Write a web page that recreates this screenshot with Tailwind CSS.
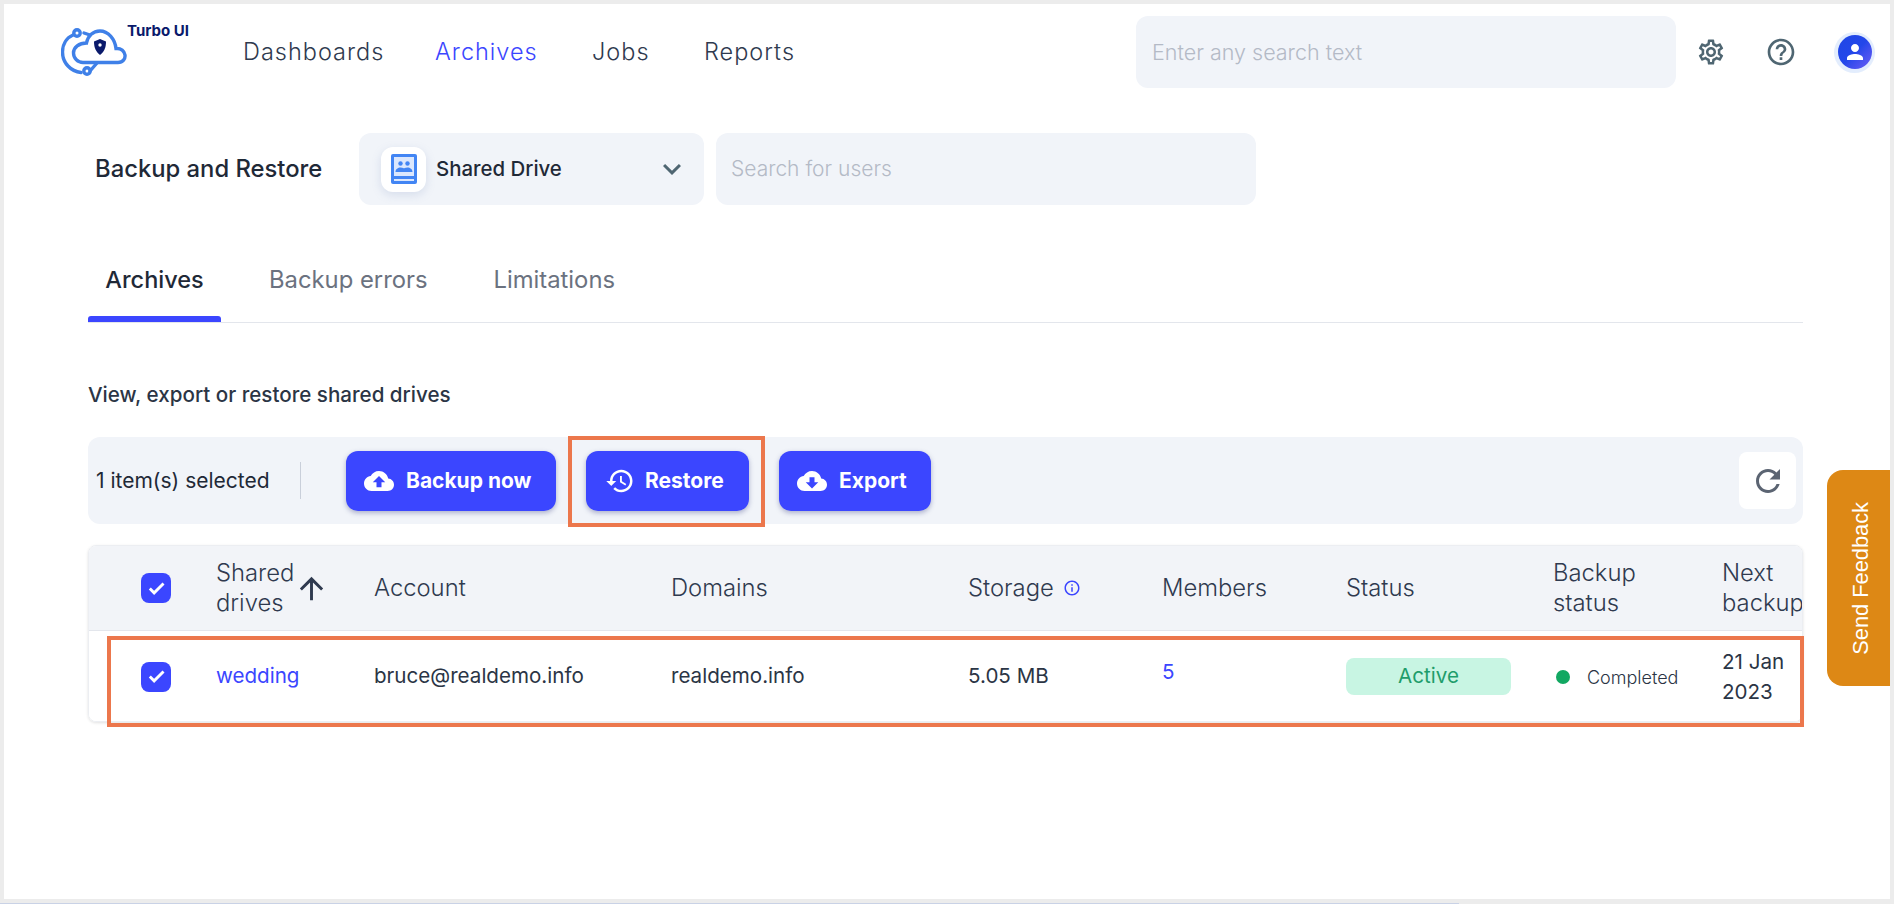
<!DOCTYPE html>
<html lang="en">
<head>
  <meta charset="UTF-8">
  <title>Turbo UI - Archives</title>
  <script src="https://cdn.jsdelivr.net/npm/@tailwindcss/browser@4"></script>
</head>
<body class="bg-[#ececec] font-['Inter',sans-serif] overflow-hidden">
  <div class="relative h-[904px] pt-1 px-1 pb-[5px]">
    <div class="h-[895px] bg-white">

      <!-- top bar -->
      <header class="flex items-center h-[96px] pl-[57px] pr-[15px]">
        <div class="flex items-start w-[182px] h-[47px] mb-[2px]">
          <svg width="66" height="48" viewBox="61 26 66 48" fill="none" stroke="#3f80e8" stroke-width="3.400" stroke-linecap="round" class="shrink-0">
            <circle cx="77" cy="31" r="3.200"/>
            <circle cx="87" cy="69" r="3.200"/>
            <path d="M73 33C66 36 62.500 43 62.500 50C62.500 61 71 69.500 81 70.500"/>
            <path d="M90 69L97 61"/>
            <path d="M84 31L90 33"/>
            <path d="M83 60.500H118C123 60.500 125.500 56.500 125 53C124.500 49 121 46 116 46.500C115 37 108 29 100 29C93 29 88 34 86.500 41C79 41 73.500 45.500 73.500 51C73.500 56.500 78 60.500 83 60.500Z"/>
            <path d="M100 37L106 39.500C106 46 104 50 100 53C96 50 94 46 94 39.500Z" fill="#0a1a6b" stroke="none"/>
            <circle cx="100" cy="43" r="1.700" fill="#fff" stroke="none"/>
          </svg>
          <span class="-mt-[6px] text-[15px] leading-[18px] font-bold text-[#0a1a6b]">Turbo UI</span>
        </div>
        <nav class="grid grid-cols-[192px_157px_112px_auto] items-center text-[23.500px] font-light tracking-[1px] text-[#2f3a4f]">
          <a class="block">Dashboards</a>
          <a class="block text-[#3b46ff]">Archives</a>
          <a class="block">Jobs</a>
          <a class="block">Reports</a>
        </nav>
        <div class="ml-auto flex items-center">
          <div class="flex items-center w-[540px] h-[72px] px-4 rounded-xl bg-[#f1f4f9] text-[21.500px] font-light text-[#b4bac6]">Enter any search text</div>
          <svg width="30" height="30" viewBox="0 0 24 24" fill="#4f6672" class="ml-5"><path d="M19.430 12.980c.04-.32.07-.64.07-.98 0-.34-.03-.66-.07-.98l2.110-1.650c.19-.15.24-.42.12-.64l-2-3.460c-.09-.16-.26-.25-.44-.25-.06 0-.12.01-.17.03l-2.490 1c-.52-.4-1.080-.73-1.690-.98l-.38-2.650C14.460 2.180 14.250 2 14 2h-4c-.25 0-.46.18-.49.42l-.38 2.650c-.61.25-1.170.59-1.690.98l-2.490-1c-.06-.02-.12-.03-.18-.03-.17 0-.34.09-.43.25l-2 3.460c-.13.22-.07.49.12.64l2.110 1.650c-.04.32-.07.65-.07.98 0 .33.03.66.07.98l-2.110 1.650c-.19.15-.24.42-.12.64l2 3.460c.09.16.26.25.44.25.06 0 .12-.01.17-.03l2.490-1c.52.4 1.080.73 1.690.98l.38 2.650c.03.24.24.42.49.42h4c.25 0 .46-.18.49-.42l.38-2.650c.61-.25 1.170-.59 1.690-.98l2.490 1c.06.02.12.03.18.03.17 0 .34-.09.43-.25l2-3.460c.12-.22.07-.49-.12-.64l-2.110-1.650zm-1.980-1.710c.04.31.05.52.05.73 0 .21-.02.43-.05.73l-.14 1.130.89.7 1.080.84-.7 1.210-1.270-.51-1.040-.42-.9.68c-.43.32-.84.56-1.250.73l-1.060.43-.16 1.130-.2 1.350h-1.400l-.19-1.350-.16-1.130-1.060-.43c-.43-.18-.83-.41-1.230-.71l-.91-.7-1.060.43-1.270.51-.7-1.210 1.080-.84.89-.7-.14-1.130c-.03-.31-.05-.54-.05-.74s.02-.43.05-.73l.14-1.130-.89-.7-1.080-.84.7-1.210 1.270.51 1.040.42.9-.68c.43-.32.84-.56 1.250-.73l1.060-.43.16-1.130.2-1.350h1.390l.19 1.350.16 1.130 1.060.43c.43.18.83.41 1.230.71l.91.7 1.060-.43 1.270-.51.7 1.210-1.070.85-.89.7.14 1.130zM12 8c-2.210 0-4 1.790-4 4s1.790 4 4 4 4-1.790 4-4-1.790-4-4-4zm0 6c-1.100 0-2-.9-2-2s.9-2 2-2 2 .9 2 2-.9 2-2 2z"/></svg>
          <svg width="32" height="32" viewBox="0 0 24 24" fill="#4f6672" class="ml-[39px]"><path d="M11 18h2v-2h-2v2zm1-16C6.480 2 2 6.480 2 12s4.480 10 10 10 10-4.480 10-10S17.520 2 12 2zm0 18c-4.410 0-8-3.590-8-8s3.590-8 8-8 8 3.590 8 8-3.590 8-8 8zm0-14c-2.210 0-4 1.790-4 4h2c0-1.100.9-2 2-2s2 .9 2 2c0 2-3 1.750-3 5h2c0-2.250 3-2.500 3-5 0-2.210-1.790-4-4-4z"/></svg>
          <div class="ml-[37px] flex items-center justify-center w-[41px] h-[41px] rounded-full bg-[#e3edfd]">
            <div class="flex items-center justify-center w-[34px] h-[34px] rounded-full bg-linear-to-br from-[#1f46e5] via-[#2347ea] to-[#6a5cf5]">
              <svg width="24" height="24" viewBox="0 0 24 24" fill="#fff"><path d="M12 12c2.210 0 4-1.790 4-4s-1.790-4-4-4-4 1.790-4 4 1.790 4 4 4zm0 2c-2.670 0-8 1.340-8 4v2h16v-2c0-2.660-5.330-4-8-4z"/></svg>
            </div>
          </div>
        </div>
      </header>

      <main class="pl-[84px] pr-[87px]">
        <!-- page heading + selectors -->
        <div class="flex items-center mt-[33px] h-[72px]">
          <h1 class="w-[271px] pl-[7px] text-[23.800px] font-medium text-[#1f2937]">Backup and Restore</h1>
          <div class="flex items-center w-[345px] h-[72px] pl-[22px] pr-[21px] rounded-xl bg-[#f1f4f9]">
            <div class="flex items-center justify-center w-[45px] h-[45px] rounded-xl bg-white shadow-[0_3px_10px_rgba(120,140,190,0.22)]">
              <svg width="26" height="30" viewBox="0 0 26 30">
                <path d="M0 2a2 2 0 0 1 2-2h22a2 2 0 0 1 2 2v26a2 2 0 0 1-2 2H2a2 2 0 0 1-2-2z" fill="#4285f4"/>
                <rect x="3" y="3" width="20" height="19" fill="#dbe7fd"/>
                <rect x="3" y="25" width="20" height="2" fill="#dbe7fd"/>
                <circle cx="9.500" cy="9.500" r="2.200" fill="#4285f4"/>
                <circle cx="16.500" cy="9.500" r="2.200" fill="#4285f4"/>
                <path d="M4.500 18c0-3 2.500-4.500 5-4.500s3.500 1 3.500 1 1-1 3.500-1 5 1.500 5 4.500z" fill="#4285f4"/>
              </svg>
            </div>
            <span class="ml-[10px] text-[20.400px] font-medium text-[#1f2937]">Shared Drive</span>
            <svg width="36" height="36" viewBox="0 0 24 24" fill="#4f6672" class="ml-auto -mr-[7px]"><path d="M16.590 8.590L12 13.170 7.410 8.590 6 10l6 6 6-6z"/></svg>
          </div>
          <div class="flex items-center w-[540px] h-[72px] ml-3 px-[15px] rounded-xl bg-[#f1f4f9] text-[21px] font-light text-[#b4bac6]">Search for users</div>
        </div>

        <!-- tabs -->
        <div class="flex items-end h-[118px] border-b border-[#e3e6ec]">
          <div class="flex flex-col w-[133px] h-[85px]">
            <span class="flex-1 flex items-center justify-center pt-[6px] text-[23.500px] font-medium text-[#1f2937]">Archives</span>
            <span class="h-[6px] rounded-t-[3px] bg-[#3b46ff]"></span>
          </div>
          <div class="flex items-center h-[85px] ml-[48px] text-[23.800px] text-[#6b7280]">Backup errors</div>
          <div class="flex items-center h-[85px] ml-[66px] text-[23.800px] text-[#6b7280]">Limitations</div>
        </div>

        <p class="mt-[59px] text-[20.600px] leading-[26px] font-medium text-[#2b3545]">View, export or restore shared drives</p>

        <!-- action toolbar -->
        <div class="flex items-center h-[87px] mt-[29px] pl-[8px] pr-[7px] rounded-xl bg-[#f1f4f9]">
          <span class="w-[204px] text-[21px] text-[#1f2937]">1 item(s) selected</span>
          <span class="w-px h-[37px] bg-[#c9cfda]"></span>
          <button class="flex items-center h-[60px] ml-[45px] pl-[18px] w-[210px] rounded-xl bg-[#3b46ff] text-[21px] font-bold text-white shadow-[0_2px_5px_rgba(40,50,120,0.35)]">
            <svg width="30" height="30" viewBox="0 0 24 24" fill="#fff"><path d="M19.350 10.040C18.670 6.590 15.640 4 12 4 9.110 4 6.600 5.640 5.350 8.040 2.340 8.360 0 10.910 0 14c0 3.310 2.690 6 6 6h13c2.760 0 5-2.240 5-5 0-2.640-2.050-4.780-4.650-4.960zM14 13v4h-4v-4H7l5-5 5 5h-3z"/></svg>
            <span class="ml-3">Backup now</span>
          </button>
          <button class="flex items-center h-[60px] ml-[30px] pl-[19px] w-[163px] rounded-xl bg-[#3b46ff] text-[21px] font-bold text-white shadow-[0_2px_5px_rgba(40,50,120,0.35)]">
            <svg width="30" height="30" viewBox="0 0 24 24" fill="#fff"><path d="M13 3c-4.970 0-9 4.030-9 9H1l3.890 3.890.07.14L9 12H6c0-3.870 3.130-7 7-7s7 3.130 7 7-3.130 7-7 7c-1.930 0-3.680-.79-4.940-2.060l-1.420 1.420C8.270 19.990 10.510 21 13 21c4.970 0 9-4.030 9-9s-4.030-9-9-9zm-1 5v5l4.280 2.540.72-1.210-3.500-2.080V8H12z"/></svg>
            <span class="ml-[10px]">Restore</span>
          </button>
          <button class="flex items-center h-[60px] ml-[30px] pl-[18px] w-[152px] rounded-xl bg-[#3b46ff] text-[21px] font-bold text-white shadow-[0_2px_5px_rgba(40,50,120,0.35)]">
            <svg width="30" height="30" viewBox="0 0 24 24" fill="#fff"><path d="M19.350 10.040C18.670 6.590 15.640 4 12 4 9.110 4 6.600 5.640 5.350 8.040 2.340 8.360 0 10.910 0 14c0 3.310 2.690 6 6 6h13c2.760 0 5-2.240 5-5 0-2.640-2.050-4.780-4.650-4.960zM17 13l-5 5-5-5h3V9h4v4h3z"/></svg>
            <span class="ml-3">Export</span>
          </button>
          <div class="ml-auto flex items-center justify-center w-[57px] h-[57px] rounded-lg bg-white">
            <svg width="36" height="36" viewBox="0 0 24 24" fill="#5b6472"><path d="M17.650 6.350C16.200 4.900 14.210 4 12 4c-4.420 0-7.990 3.580-7.990 8s3.570 8 7.990 8c3.730 0 6.840-2.550 7.730-6h-2.080c-.82 2.330-3.040 4-5.650 4-3.310 0-6-2.690-6-6s2.690-6 6-6c1.660 0 3.140.69 4.220 1.780L13 11h7V4l-2.350 2.350z"/></svg>
          </div>
        </div>

        <!-- table -->
        <div class="mt-[21px] h-[177px] w-[1715px] overflow-hidden rounded-lg border border-[#eceef2] shadow-[0_1px_3px_rgba(0,0,0,0.12)] text-[20.600px]">
          <div class="grid grid-cols-[127px_158px_297px_297px_194px_184px_207px_169px_200px] items-center h-[85px] border-b border-[#e3e6ec] bg-[#f2f4f8] text-[23.800px] font-light leading-[30px] text-[#2f3a4f]">
            <div class="pl-[52px]">
              <span class="flex items-center justify-center w-[30px] h-[30px] rounded-lg bg-[#3b46ff]"><svg width="19" height="19" viewBox="0 0 24 24" fill="#fff" stroke="#fff" stroke-width="1.600"><path d="M9 16.170L4.830 12l-1.420 1.410L9 19 21 7l-1.410-1.410z"/></svg></span>
            </div>
            <div class="flex items-center">
              <span>Shared<br>drives</span>
              <svg width="35" height="35" viewBox="0 0 24 24" fill="#2f3a4f"><path d="M4 12l1.410 1.410L11 7.830V20h2V7.830l5.580 5.590L20 12l-8-8-8 8z"/></svg>
            </div>
            <div>Account</div>
            <div>Domains</div>
            <div class="flex items-center gap-[9px]">Storage
              <svg width="18" height="18" viewBox="0 0 24 24" fill="#3b46ff"><path d="M11 7h2v2h-2zm0 4h2v6h-2zm1-9C6.480 2 2 6.480 2 12s4.480 10 10 10 10-4.480 10-10S17.520 2 12 2zm0 18c-4.410 0-8-3.590-8-8s3.590-8 8-8 8 3.590 8 8-3.590 8-8 8z"/></svg>
            </div>
            <div>Members</div>
            <div>Status</div>
            <div>Backup<br>status</div>
            <div>Next<br>backup</div>
          </div>
          <div class="grid grid-cols-[127px_158px_297px_297px_194px_184px_207px_169px_200px] items-center h-[91px] bg-white text-[#2b3545]">
            <div class="pl-[52px]">
              <span class="flex items-center justify-center w-[30px] h-[30px] rounded-lg bg-[#3b46ff]"><svg width="19" height="19" viewBox="0 0 24 24" fill="#fff" stroke="#fff" stroke-width="1.600"><path d="M9 16.170L4.830 12l-1.420 1.410L9 19 21 7l-1.410-1.410z"/></svg></span>
            </div>
            <div class="text-[#3b46ff]">wedding</div>
            <div>bruce@realdemo.info</div>
            <div>realdemo.info</div>
            <div>5.05 MB</div>
            <div class="pb-[9px] text-[#3b46ff]">5</div>
            <div><span class="flex items-center justify-center w-[165px] h-[37px] rounded-lg bg-[#c8f5e3] text-[#1f9d6b]">Active</span></div>
            <div class="flex items-center pl-[3px]">
              <span class="w-[14px] h-[14px] rounded-full bg-[#12a862]"></span>
              <span class="ml-[17px] pt-[2px] text-[18px] font-light">Completed</span>
            </div>
            <div class="leading-[30px]">21 Jan<br>2023</div>
          </div>
        </div>
      </main>
    </div>

    <!-- annotation boxes drawn over the screenshot -->
    <div class="absolute left-[568px] top-[436px] w-[197px] h-[91px] border-4 border-[#ec774c]"></div>
    <div class="absolute left-[107px] top-[636px] w-[1697px] h-[91px] border-4 border-[#ec774c]"></div>

    <!-- feedback tab -->
    <div class="absolute left-[1827px] top-[470px] flex items-center justify-center w-[63px] h-[216px] rounded-l-2xl bg-[#dd8815]">
      <span class="block ml-[6px] -rotate-90 whitespace-nowrap font-['Liberation_Sans',sans-serif] text-[21.800px] text-white">Send Feedback</span>
    </div>

    <div class="absolute left-0 bottom-0 w-[1459px] h-px bg-[#c9d2e6]"></div>
  </div>
</body>
</html>
